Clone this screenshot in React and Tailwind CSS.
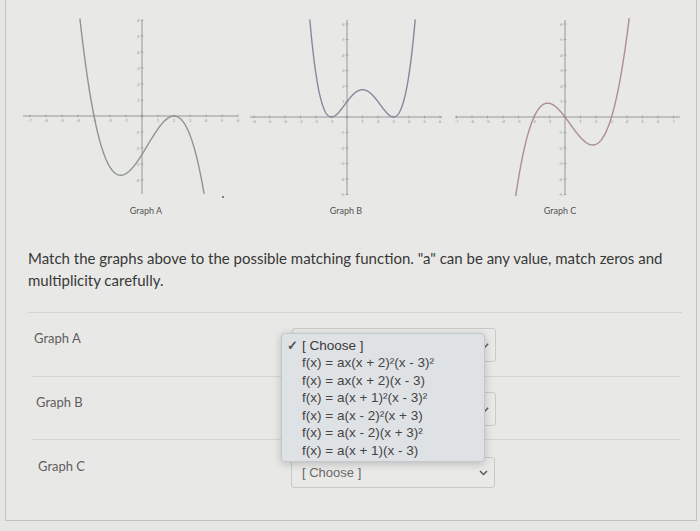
import React from "react";

function curvePath(f, ox, oy, u, ymin, ymax) {
  const pts = [];
  for (let x = -9; x <= 9; x += 0.02) {
    const py = oy - f(x) * u;
    if (py >= ymin && py <= ymax) {
      pts.push([ox + x * u, py]);
    }
  }
  return pts.map((p, i) => (i === 0 ? "M" : "L") + p[0].toFixed(2) + " " + p[1].toFixed(2)).join(" ");
}

function Graph({ width, ox, oy, u, xFrom, xTo, yTop, yBot, xTicks, yTicks, f, color, label, labelX, ymin, ymax, dot }) {
  return (
    <svg width={width} height="222" className="overflow-visible block shrink-0">
      <line x1={xFrom} y1={oy} x2={xTo} y2={oy} stroke="#8e8e8e" strokeWidth="0.9" />
      <line x1={ox} y1={yTop} x2={ox} y2={yBot} stroke="#8e8e8e" strokeWidth="0.9" />
      {xTicks.map((t) => (
        <g key={"x" + t}>
          <line x1={ox + t * u} y1={oy - 1.5} x2={ox + t * u} y2={oy + 1.5} stroke="#8e8e8e" strokeWidth="0.6" />
          {t !== 0 && (
            <text x={ox + t * u} y={oy + 6} fontSize="4.5" fill="#9a9a9a" textAnchor="middle" fontFamily="Lato, sans-serif">
              {t}
            </text>
          )}
        </g>
      ))}
      {yTicks.map((t) => (
        <g key={"y" + t}>
          <line x1={ox - 1.5} y1={oy - t * u} x2={ox + 1.5} y2={oy - t * u} stroke="#8e8e8e" strokeWidth="0.6" />
          {t !== 0 && (
            <text x={ox - 2.5} y={oy - t * u + 1.6} fontSize="4.5" fill="#9a9a9a" textAnchor="end" fontFamily="Lato, sans-serif">
              {t}
            </text>
          )}
        </g>
      ))}
      <path d={curvePath(f, ox, oy, u, ymin, ymax)} fill="none" stroke={color} strokeWidth="1.4" />
      {dot && <circle cx={dot[0]} cy={dot[1]} r="1.1" fill="#666" />}
      <text x={labelX} y="214" fontSize="9" fill="#555" textAnchor="middle" fontFamily="Lato, sans-serif">
        {label}
      </text>
    </svg>
  );
}

const range = (a, b) => {
  const r = [];
  for (let i = a; i <= b; i++) r.push(i);
  return r;
};

const options = [
  "f(x) = ax(x + 2)²(x - 3)²",
  "f(x) = ax(x + 2)(x - 3)",
  "f(x) = a(x + 1)²(x - 3)²",
  "f(x) = a(x - 2)²(x + 3)",
  "f(x) = a(x - 2)(x + 3)²",
  "f(x) = a(x + 1)(x - 3)",
];

function SelectBox({ h, children, mark }) {
  return (
    <div
      className={`w-[204px] ${h} border border-[#c9c9c7] rounded-[3px] bg-[#e9e9e7] flex items-center justify-between pl-[10px] pr-[6px]`}
    >
      <span className="text-[13px] text-[#6a6a6a] font-['Liberation_Sans',Arial,sans-serif]">{children}</span>
      {mark}
    </div>
  );
}

const Chevron = () => (
  <svg width="9" height="6" viewBox="0 0 9 6" className="mt-[1px]">
    <path d="M1 1 L4.5 4.5 L8 1" fill="none" stroke="#555" strokeWidth="1.4" />
  </svg>
);

const Tick = () => (
  <svg width="5" height="5" viewBox="0 0 5 5">
    <path d="M0.8 4.2 L4.2 0.8" stroke="#555" strokeWidth="1.3" />
  </svg>
);

export default function App() {
  return (
    <div className="w-[700px] h-[531px] bg-[#e6e6e4] overflow-hidden relative font-['Lato','Open_Sans',sans-serif]">
      <div className="ml-[5px] w-[692px] h-[521px] border-l border-r border-b border-[#c2c2c0] bg-[#e8e8e6]">
        {/* graphs */}
        <div className="flex h-[225px]">
          <div className="w-[14px] shrink-0" />
          <Graph
            width={220}
            ox={122}
            oy={116}
            u={16}
            xFrom={3}
            xTo={218}
            yTop={20}
            yBot={194}
            xTicks={range(-7, 6)}
            yTicks={range(-4, 6)}
            f={(x) => -0.2 * (x + 3) * (x - 2) * (x - 2)}
            color="#8d978d"
            label="Graph A"
            labelX={126}
            ymin={17}
            ymax={194}
            dot={[203, 197]}
          />
          <Graph
            width={220}
            ox={107}
            oy={117}
            u={15.5}
            xFrom={10}
            xTo={202}
            yTop={20}
            yBot={195}
            xTicks={range(-6, 6)}
            yTicks={range(-5, 6)}
            f={(x) => 0.11 * (x + 1) * (x + 1) * (x - 3) * (x - 3)}
            color="#8b879b"
            label="Graph B"
            labelX={106}
            ymin={17}
            ymax={197}
          />
          <Graph
            width={230}
            ox={105}
            oy={117}
            u={15.5}
            xFrom={-5}
            xTo={220}
            yTop={20}
            yBot={195}
            xTicks={range(-7, 7)}
            yTicks={range(-5, 6)}
            f={(x) => 0.22 * x * (x + 2) * (x - 3)}
            color="#ab8e96"
            label="Graph C"
            labelX={100}
            ymin={18}
            ymax={197}
          />
        </div>

        {/* question text */}
        <p className="pt-[22px] pl-[22px] pr-[10px] text-[15px] leading-[22px] text-[#383838]">
          Match the graphs above to the possible matching function. "a" can be any value, match zeros and multiplicity
          carefully.
        </p>
        <div className="mt-[21px] ml-[22px] w-[654px] border-t border-[#d3d3d1]" />

        {/* rows */}
        <div className="ml-[26px] w-[648px] h-[64px] border-b border-[#d4d4d2] flex items-start">
          <div className="w-[260px] pl-[2px] mt-[16px] leading-[18px] text-[13px] text-[#5e5e5e]">Graph A</div>
          <div className="mt-[15px]">
            <SelectBox h="h-[34px]" mark={<Tick />} />
          </div>
        </div>
        <div className="ml-[26px] w-[648px] h-[63px] border-b border-[#d4d4d2] flex items-start">
          <div className="w-[260px] pl-[4px] mt-[16px] leading-[18px] text-[13px] text-[#5e5e5e]">Graph B</div>
          <div className="mt-[15px]">
            <SelectBox h="h-[34px]" mark={<Tick />} />
          </div>
        </div>
        <div className="ml-[26px] w-[648px] flex items-start">
          <div className="w-[259px] pl-[6px] mt-[17px] leading-[18px] text-[13px] text-[#5e5e5e]">Graph C</div>
          <div className="mt-[17px]">
            <SelectBox h="h-[31px]" mark={<Chevron />}>
              {"[ Choose ]"}
            </SelectBox>
          </div>
        </div>
      </div>

      {/* open dropdown menu */}
      <div className="absolute left-[281px] top-[333px] w-[204px] h-[129px] bg-[#dfe2e5] border border-[#c3c7cb] rounded-[4px] shadow-[0_2px_8px_rgba(0,0,0,0.2)] pt-[3px] font-['Liberation_Sans',Arial,sans-serif] text-[13.5px] text-[#454545]">
        <div className="flex items-center h-[17.5px]">
          <span className="w-[20px] pl-[5px] text-[13px] font-bold text-[#555]">✓</span>
          <span className="text-[#3a3a3a]">{"[ Choose ]"}</span>
        </div>
        {options.map((o) => (
          <div key={o} className="flex items-center h-[17.5px] pl-[20px]">
            {o}
          </div>
        ))}
      </div>
    </div>
  );
}
